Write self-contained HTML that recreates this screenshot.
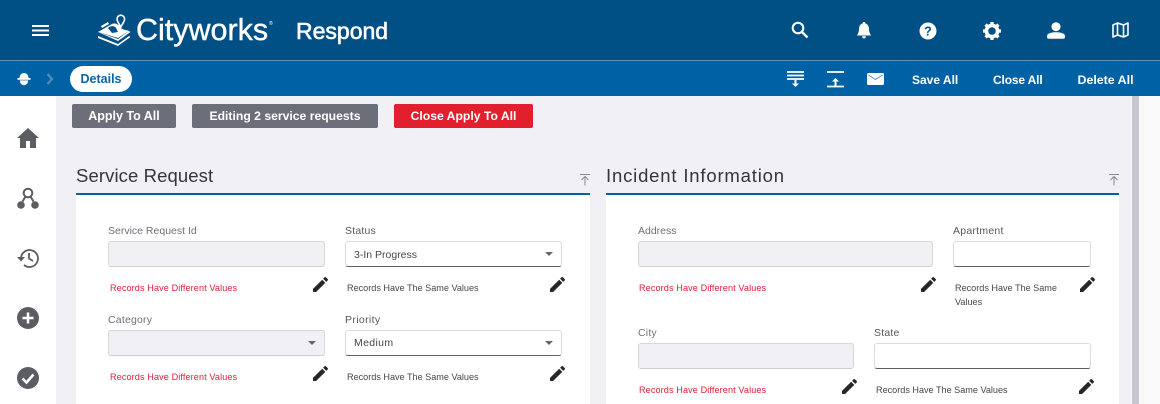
<!DOCTYPE html>
<html><head><meta charset="utf-8">
<style>
*{box-sizing:border-box}
html,body{margin:0;padding:0;width:1160px;height:404px;overflow:hidden;background:#f0f0f5;font-family:"Liberation Sans",sans-serif}
.a{position:absolute}
.t{position:absolute;white-space:nowrap;line-height:1}
svg{position:absolute;overflow:visible}
.btn{position:absolute;top:104px;height:24px;border-radius:2px;background:#6c6e7a;color:#fff;font-weight:700;font-size:12.2px;line-height:24px;text-align:center;white-space:nowrap}
.lab{position:absolute;font-size:10.5px;line-height:12px;color:#6f7179;white-space:nowrap;letter-spacing:.2px}
.lab.d{color:#55575e}
.f{position:absolute;height:26px;border:1px solid #dcdce0;border-radius:3px;background:#fff;border-bottom:1px solid #5f6066;font-size:10.5px;line-height:24px;padding-left:8px;color:#44464d;letter-spacing:0}
.f.g{background:#f0f0f5;border:1px solid #d6d6dc;border-bottom:1px solid #cfcfd6}
.f i{position:absolute;right:8px;top:10px;width:0;height:0;border-left:4.5px solid transparent;border-right:4.5px solid transparent;border-top:4.5px solid #66676e}
.r{position:absolute;font-size:9.1px;line-height:14px;color:#e3203a;white-space:nowrap;letter-spacing:.11px}
.s{position:absolute;font-size:9.1px;line-height:14px;color:#44464d;white-space:nowrap;letter-spacing:0}
.nav{position:absolute;top:73px;color:#fff;font-weight:700;font-size:12.2px;line-height:14px;white-space:nowrap}
.h{position:absolute;top:165px;font-size:18.5px;line-height:21px;color:#33353c;white-space:nowrap}
.pen{width:15px;height:15px}
</style></head>
<body>
<div class="a" style="left:0;top:0;width:1160px;height:60px;background:#005085"></div>
<div class="a" style="left:0;top:60px;width:1160px;height:1px;background:#5b93bb"></div>
<div class="a" style="left:0;top:61px;width:1160px;height:35px;background:#0062a5"></div>
<div class="a" style="left:0;top:96px;width:56px;height:308px;background:#fff"></div>
<div class="a" style="left:1131px;top:96px;width:1px;height:308px;background:#f9f9fb"></div>
<div class="a" style="left:1132px;top:96px;width:7px;height:308px;background:#c6c7d0"></div>
<div class="a" style="left:1139px;top:96px;width:21px;height:308px;background:#f9f9f9"></div>

<!-- hamburger -->
<svg style="left:32px;top:25px" width="17" height="11"><path d="M0 1H17M0 5.5H17M0 10H17" stroke="#fff" stroke-width="2"/></svg>

<!-- logo -->
<svg style="left:97px;top:14px" width="36" height="32" viewBox="0 0 36 32">
<path d="M20 5a3.800 3.800 0 1 1 7.600 0c0 2.500-2.300 5-3.800 8c-1.500-3-3.800-5.500-3.800-8z" fill="none" stroke="#fff" stroke-width="1.600"/>
<path d="M1 18l14-8c2-1 6-1 9 4c2 2 6 2 8 3l-11 7z" fill="#fff"/>
<path d="M4 12l7-4 1 2-7 4zM1 18l20 7 11-8 1.500 1-12.500 9z" fill="#fff"/>
<path d="M1 22l20 8 11-8 1.500 1-12.500 9-20-8z" fill="#fff"/>
<path d="M11 14c2-2 6-3 8 0l2 4-6 1z" fill="#005085"/>
</svg>
<div class="t" style="left:136px;top:11.500px;font-size:30.500px;color:#fff;line-height:36px;-webkit-text-stroke:.4px #fff">Cityworks</div>
<div class="t" style="left:269px;top:22px;font-size:5px;color:#fff">®</div>
<div class="t" style="left:296px;top:18px;font-size:23px;color:#fff;line-height:26px;-webkit-text-stroke:.6px #fff">Respond</div>

<!-- top icons -->
<svg style="left:791px;top:21px" width="18" height="18"><circle cx="7" cy="7" r="5.300" fill="none" stroke="#fff" stroke-width="2"/><path d="M11 11l5.500 5.500" stroke="#fff" stroke-width="2.300"/></svg>
<svg style="left:856px;top:22px" width="16" height="17" viewBox="0 0 16 17"><path d="M8 0c1 0 1.400.7 1.400 1.500C12 2.300 13 4.500 13 7c0 3 1 4.500 2 6.500H1c1-2 2-3.500 2-6.500 0-2.500 1-4.700 3.600-5.500C6.600.7 7 0 8 0zM6 14.300h4c0 1.200-1 2.200-2 2.200s-2-1-2-2.200z" fill="#fff"/></svg>
<svg style="left:919px;top:22px" width="18" height="18"><circle cx="9" cy="9" r="8.500" fill="#fff"/><text x="9" y="13.500" text-anchor="middle" font-family="Liberation Sans" font-weight="700" font-size="12.500" fill="#005085">?</text></svg>
<svg style="left:983px;top:22px" width="18" height="18" viewBox="0 0 18 18"><circle cx="9" cy="9" r="5.600" fill="none" stroke="#fff" stroke-width="3.600"/><path d="M9 0v18M0 9h18M2.600 2.600l12.800 12.800M15.400 2.600L2.600 15.400" stroke="#fff" stroke-width="3.300" stroke-dasharray="3.200 11.600 3.200 0"/></svg>
<svg style="left:1047px;top:22px" width="18" height="17" viewBox="0 0 18 17"><circle cx="9" cy="4.700" r="4.500" fill="#fff"/><path d="M0 15v-1c0-2.500 4-3.800 9-3.800s9 1.300 9 3.800v1c0 1-.5 1.700-1.500 1.700h-15C.5 16.700 0 16 0 15z" fill="#fff"/></svg>
<svg style="left:1112px;top:22px" width="17" height="16" viewBox="0 0 17 16"><path d="M1 3l4.500-2 6 2L16 1v12l-4.500 2-6-2L1 15zM5.500 1v12M11.500 3v12" fill="none" stroke="#fff" stroke-width="1.600" stroke-linejoin="round"/></svg>

<!-- sub bar -->
<svg style="left:17px;top:72px" width="14" height="14" viewBox="0 0 14 14"><path d="M2.500 6.200C2.500 3 4.500 1 7 1s4.500 2 4.500 5.200z" fill="#fff"/><path d="M0.500 6h13v1.800H.5z" fill="#fff"/><path d="M2.800 8.400h8.400c0 2.500-1.700 4.800-4.200 4.800s-4.200-2.300-4.200-4.800z" fill="#fff"/></svg>
<svg style="left:46px;top:73px" width="8" height="12"><path d="M1.500 1l4.500 5-4.500 5" fill="none" stroke="#4d8dbd" stroke-width="2.400"/></svg>
<div class="a" style="left:70px;top:66px;width:62px;height:26px;border-radius:13px;background:#fff;color:#0a63a6;font-weight:700;font-size:12.500px;line-height:26px;text-align:center">Details</div>

<svg style="left:787px;top:71px" width="17" height="17"><path d="M0 1H17M0 4.500H17M0 8H17" stroke="#fff" stroke-width="1.700"/><path d="M8.500 9v4" stroke="#fff" stroke-width="2"/><path d="M5 12.500h7l-3.500 3.500z" fill="#fff"/></svg>
<svg style="left:827px;top:71px" width="17" height="17"><path d="M0 1H17M0 15.500H17" stroke="#fff" stroke-width="1.700"/><path d="M8.500 9v6" stroke="#fff" stroke-width="2"/><path d="M5 10.500h7L8.500 7z" fill="#fff"/></svg>
<svg style="left:867px;top:73px" width="17" height="12"><rect width="17" height="12" rx="1.500" fill="#fff"/><path d="M1.500 2l7 4.500 7-4.500" fill="none" stroke="#4d93c4" stroke-width="1"/></svg>
<div class="nav" style="left:912px;font-size:12px">Save All</div>
<div class="nav" style="left:993px;font-size:12px;letter-spacing:-.15px">Close All</div>
<div class="nav" style="left:1077.500px;font-size:12.400px">Delete All</div>

<!-- buttons -->
<div class="btn" style="left:72px;width:104px;font-size:12.500px">Apply To All</div>
<div class="btn" style="left:192px;width:186px">Editing 2 service requests</div>
<div class="btn" style="left:394px;width:139px;background:#e21f2d">Close Apply To All</div>

<!-- side icons -->
<svg style="left:17px;top:128px" width="22" height="20" viewBox="0 0 22 20"><path d="M11 0L22 10h-3v10h-6v-7H9v7H3V10H0z" fill="#5c5d63"/></svg>
<svg style="left:17px;top:187px" width="22" height="22" viewBox="0 0 22 22"><circle cx="11" cy="6" r="4.300" fill="none" stroke="#5c5d63" stroke-width="2"/><circle cx="4" cy="18" r="3.800" fill="#5c5d63"/><circle cx="18" cy="18" r="3.800" fill="#5c5d63"/><path d="M8.500 9.500l-3 5M13.500 9.500l3 5" stroke="#5c5d63" stroke-width="2"/></svg>
<svg style="left:17px;top:247px" width="22" height="22" viewBox="0 0 22 22"><path d="M4 11a8.500 8.500 0 1 1 3 7" fill="none" stroke="#5c5d63" stroke-width="1.800"/><path d="M0 10h8l-4 4.500z" fill="#5c5d63"/><path d="M12 6v5.500l4 2.500" fill="none" stroke="#5c5d63" stroke-width="1.800"/></svg>
<svg style="left:17px;top:307px" width="22" height="22"><circle cx="11" cy="11" r="11" fill="#5c5d63"/><path d="M11 5.500v11M5.500 11h11" stroke="#fff" stroke-width="2.500"/></svg>
<svg style="left:17px;top:367px" width="22" height="22"><circle cx="11" cy="11" r="11" fill="#5c5d63"/><path d="M5.500 11.500l4 4 7-8" fill="none" stroke="#fff" stroke-width="2.600"/></svg>

<!-- panels -->
<div class="h" style="left:76px;letter-spacing:.1px">Service Request</div>
<div class="h" style="left:606px;letter-spacing:.82px">Incident Information</div>
<svg style="left:580px;top:174px" width="10" height="12"><path d="M0 .5H10M5 11.500V3M1.500 6L5 2.500 8.500 6" fill="none" stroke="#888a92" stroke-width="1"/></svg>
<svg style="left:1109px;top:174px" width="10" height="12"><path d="M0 .5H10M5 11.500V3M1.500 6L5 2.500 8.500 6" fill="none" stroke="#888a92" stroke-width="1"/></svg>
<div class="a" style="left:76px;top:193px;width:514px;height:211px;background:#fff;border-top:2px solid #0062a5"></div>
<div class="a" style="left:606px;top:193px;width:513px;height:211px;background:#fff;border-top:2px solid #0062a5"></div>

<!-- left fields -->
<div class="lab" style="left:108px;top:225px;letter-spacing:0">Service Request Id</div>
<div class="f g" style="left:108px;top:241px;width:217px"></div>
<div class="r" style="left:110px;top:281px">Records Have Different Values</div>

<div class="lab d" style="left:345px;top:225px">Status</div>
<div class="f" style="left:345px;top:241px;width:217px;line-height:26px">3-In Progress<i></i></div>
<div class="s" style="left:347px;top:281px">Records Have The Same Values</div>

<div class="lab" style="left:108px;top:314px">Category</div>
<div class="f g" style="left:108px;top:330px;width:217px"><i></i></div>
<div class="r" style="left:110px;top:370px">Records Have Different Values</div>

<div class="lab d" style="left:345px;top:314px;letter-spacing:.35px">Priority</div>
<div class="f" style="left:345px;top:330px;width:217px;letter-spacing:.35px">Medium<i></i></div>
<div class="s" style="left:347px;top:370px">Records Have The Same Values</div>

<!-- right fields -->
<div class="lab" style="left:638px;top:225px;letter-spacing:0">Address</div>
<div class="f g" style="left:638px;top:241px;width:295px"></div>
<div class="r" style="left:639px;top:281px">Records Have Different Values</div>

<div class="lab d" style="left:953px;top:225px;letter-spacing:.25px">Apartment</div>
<div class="f" style="left:953px;top:241px;width:138px"></div>
<div class="s" style="left:955px;top:281px">Records Have The Same</div>
<div class="s" style="left:955px;top:295px">Values</div>

<div class="lab" style="left:638px;top:327px">City</div>
<div class="f g" style="left:638px;top:343px;width:216px"></div>
<div class="r" style="left:639px;top:383px">Records Have Different Values</div>

<div class="lab d" style="left:874px;top:327px">State</div>
<div class="f" style="left:874px;top:343px;width:217px"></div>
<div class="s" style="left:876px;top:383px">Records Have The Same Values</div>

<!-- pencils -->
<svg class="pen" style="left:312.500px;top:276.500px" viewBox="0 0 16 16"><path d="M0 16v-3.300L9.800 2.900l3.300 3.300L3.300 16zM10.800 1.900L12.400.3c.4-.4 1-.4 1.400 0l1.900 1.900c.4.400.4 1 0 1.400l-1.600 1.600z" fill="#26272c"/></svg>
<svg class="pen" style="left:549.500px;top:276.500px" viewBox="0 0 16 16"><path d="M0 16v-3.300L9.800 2.900l3.300 3.300L3.300 16zM10.800 1.900L12.400.3c.4-.4 1-.4 1.400 0l1.900 1.900c.4.400.4 1 0 1.400l-1.600 1.600z" fill="#26272c"/></svg>
<svg class="pen" style="left:312.500px;top:365.500px" viewBox="0 0 16 16"><path d="M0 16v-3.300L9.800 2.900l3.300 3.300L3.300 16zM10.800 1.900L12.400.3c.4-.4 1-.4 1.400 0l1.900 1.900c.4.400.4 1 0 1.400l-1.600 1.600z" fill="#26272c"/></svg>
<svg class="pen" style="left:549.500px;top:365.500px" viewBox="0 0 16 16"><path d="M0 16v-3.300L9.800 2.900l3.300 3.300L3.300 16zM10.800 1.900L12.400.3c.4-.4 1-.4 1.400 0l1.900 1.900c.4.400.4 1 0 1.400l-1.600 1.600z" fill="#26272c"/></svg>
<svg class="pen" style="left:920.500px;top:276.500px" viewBox="0 0 16 16"><path d="M0 16v-3.300L9.800 2.900l3.300 3.300L3.300 16zM10.800 1.900L12.400.3c.4-.4 1-.4 1.400 0l1.900 1.900c.4.400.4 1 0 1.400l-1.600 1.600z" fill="#26272c"/></svg>
<svg class="pen" style="left:1079.500px;top:276.500px" viewBox="0 0 16 16"><path d="M0 16v-3.300L9.800 2.900l3.300 3.300L3.300 16zM10.800 1.900L12.400.3c.4-.4 1-.4 1.400 0l1.900 1.900c.4.400.4 1 0 1.400l-1.600 1.600z" fill="#26272c"/></svg>
<svg class="pen" style="left:842px;top:378.500px" viewBox="0 0 16 16"><path d="M0 16v-3.300L9.800 2.900l3.300 3.300L3.300 16zM10.800 1.900L12.400.3c.4-.4 1-.4 1.400 0l1.900 1.900c.4.400.4 1 0 1.400l-1.600 1.600z" fill="#26272c"/></svg>
<svg class="pen" style="left:1079px;top:378.500px" viewBox="0 0 16 16"><path d="M0 16v-3.300L9.800 2.900l3.300 3.300L3.300 16zM10.800 1.900L12.400.3c.4-.4 1-.4 1.400 0l1.900 1.900c.4.400.4 1 0 1.400l-1.600 1.600z" fill="#26272c"/></svg>
</body></html>
